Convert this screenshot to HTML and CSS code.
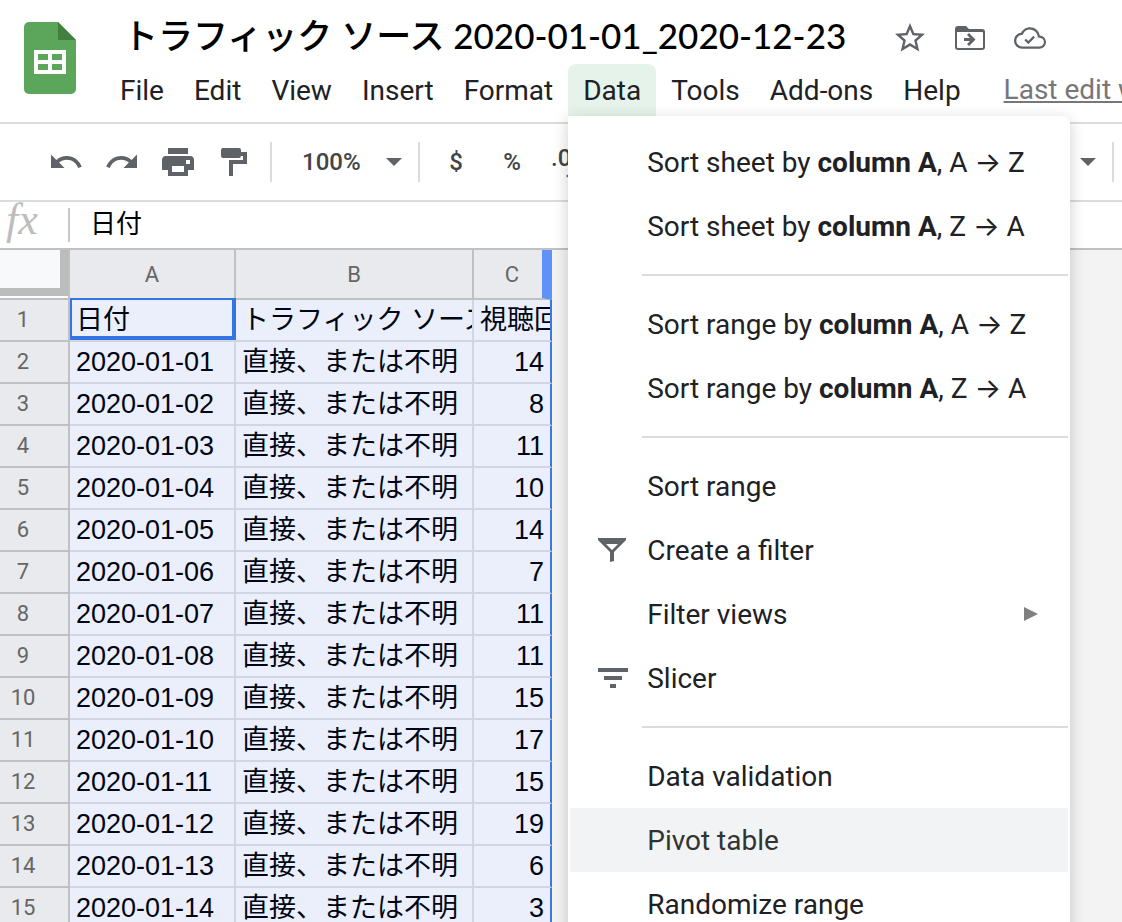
FILE: index.html
```html
<!DOCTYPE html>
<html lang="en">
<head>
  <meta charset="UTF-8" />
  <meta name="viewport" content="width=device-width, initial-scale=1.0" />
  <title>トラフィック ソース 2020-01-01_2020-12-23</title>
  <link rel="stylesheet" href="styles.css">
</head>
<body>
  <header class="header">
    <svg class="logo" viewBox="0 0 52 72">
      <path fill="#5ca65c" d="M5 0h29l18 18v49a5 5 0 0 1-5 5H5a5 5 0 0 1-5-5V5a5 5 0 0 1 5-5z"/>
      <path fill="#41803f" d="M34 0l18 18H34z"/>
      <path fill="#fff" fill-rule="evenodd" d="M10 28h32v24H10zM14 32v6h10v-6zM28 32v6h10v-6zM14 42v6h10v-6zM28 42v6h10v-6z"/>
    </svg>
    <div class="header-main">
      <div class="title-row">
        <h1>トラフィック ソース 2020-01-01_2020-12-23</h1>
        <button class="title-btn" aria-label="Star">
          <svg width="36" height="36" viewBox="0 0 24 24"><path d="M22 9.24l-7.19-.62L12 2 9.19 8.63 2 9.24l5.46 4.73L5.82 21 12 17.27 18.18 21l-1.63-7.03L22 9.24zM12 15.4l-3.76 2.27 1-4.28-3.32-2.88 4.38-.38L12 6.1l1.71 4.04 4.38.38-3.32 2.88 1 4.28L12 15.4z"/></svg>
        </button>
        <button class="title-btn" aria-label="Move">
          <svg width="36" height="36" viewBox="0 0 36 36"><path fill-rule="evenodd" d="M6 6h8l3 3h13a3 3 0 0 1 3 3v15a3 3 0 0 1-3 3H6a3 3 0 0 1-3-3V9a3 3 0 0 1 3-3zM5 12v15a1 1 0 0 0 1 1h24a1 1 0 0 0 1-1V13a1 1 0 0 0-1-1z"/><path d="M12 18h6l-3-3 2-2 6.500 6.500-6.500 6.500-2-2 3-3h-6z"/></svg>
        </button>
        <button class="title-btn" aria-label="Document status">
          <svg width="32" height="32" viewBox="0 0 24 24"><path d="M19.350 10.040C18.670 6.590 15.640 4 12 4 9.110 4 6.610 5.640 5.360 8.040 2.340 8.360 0 10.910 0 14c0 3.310 2.690 6 6 6h13c2.760 0 5-2.240 5-5 0-2.640-2.050-4.780-4.650-4.960zM19 18.300H6A4.300 4.300 0 0 1 5.600 9.720l.9-.1.420-.78A5.750 5.750 0 0 1 17.680 10.370l.26 1.280 1.300.09A3.280 3.280 0 0 1 19 18.300zM10.700 14.200L9 12.500l-1.200 1.200 2.900 2.900 5-5-1.200-1.200z"/></svg>
        </button>
      </div>
      <nav class="menubar">
        <button>File</button>
        <button>Edit</button>
        <button>View</button>
        <button>Insert</button>
        <button>Format</button>
        <div class="menu-wrap">
          <button class="active">Data</button>
          <div class="dropdown">
            <button><span>Sort sheet by <b>column A</b>, A <i>→</i> Z</span></button>
            <button><span>Sort sheet by <b>column A</b>, Z <i>→</i> A</span></button>
            <hr>
            <button><span>Sort range by <b>column A</b>, A <i>→</i> Z</span></button>
            <button><span>Sort range by <b>column A</b>, Z <i>→</i> A</span></button>
            <hr>
            <button><span>Sort range</span></button>
            <button>
              <svg class="item-icon" viewBox="0 0 32 32"><path fill-rule="evenodd" d="M1 4h28v2L17 18v9l-4 1V18L1 6zM9 10l6 6 6-6z"/></svg>
              <span>Create a filter</span>
            </button>
            <button><span>Filter views</span><svg class="submenu-arrow" viewBox="0 0 14 14"><path d="M0 0l14 7-14 7z"/></svg></button>
            <button>
              <svg class="item-icon" viewBox="0 0 32 32"><path d="M1 6h30v4H1zM7 14h18v4H7zM13 22h6v4h-6z"/></svg>
              <span>Slicer</span>
            </button>
            <hr>
            <button><span>Data validation</span></button>
            <button class="hover"><span>Pivot table</span></button>
            <button><span>Randomize range</span></button>
          </div>
        </div>
        <button>Tools</button>
        <button>Add-ons</button>
        <button>Help</button>
        <a class="last-edit" href="#">Last edit was</a>
      </nav>
    </div>
  </header>

  <div class="toolbar">
    <button aria-label="Undo"><svg width="36" height="36" viewBox="0 0 24 24"><path d="M12.500 8c-2.650 0-5.050.99-6.900 2.600L2 7v9h9l-3.620-3.620c1.390-1.160 3.160-1.880 5.120-1.880 3.540 0 6.550 2.310 7.600 5.500l2.370-.78C21.080 11.030 17.150 8 12.500 8z"/></svg></button>
    <button aria-label="Redo"><svg width="36" height="36" viewBox="0 0 24 24"><path d="M18.400 10.600C16.550 8.990 14.150 8 11.500 8c-4.650 0-8.580 3.030-9.960 7.220L3.900 16c1.050-3.190 4.050-5.500 7.600-5.500 1.950 0 3.730.72 5.120 1.880L13 16h9V7l-3.600 3.600z"/></svg></button>
    <button aria-label="Print"><svg width="36" height="36" viewBox="0 0 36 36"><path fill-rule="evenodd" d="M8 4h20v6H8zM6 12h24a4 4 0 0 1 4 4v10h-6v6H8v-6H2V16a4 4 0 0 1 4-4zM26 16v4h4v-4zM12 22v6h12v-6z"/></svg></button>
    <button aria-label="Paint format"><svg width="36" height="36" viewBox="0 0 36 36"><path d="M7 4h16a2 2 0 0 1 2 2v2h6v12H17v12h-4V16h14v-4h-2a2 2 0 0 1-2 2H7a2 2 0 0 1-2-2V6a2 2 0 0 1 2-2z"/></svg></button>
    <span class="divider"></span>
    <div class="zoom">
      <select aria-label="Zoom"><option>100%</option></select>
      <svg class="caret" viewBox="0 0 16 8"><path d="M0 0h16L8 8z"/></svg>
    </div>
    <span class="divider"></span>
    <button>$</button>
    <button>%</button>
    <button class="decimal" aria-label="Decrease decimal places">.0<svg width="24" height="8" viewBox="0 0 24 8"><path d="M0 4l5-4v3h19v2H5v3z"/></svg></button>
    <div class="toolbar-end">
      <button class="more" aria-label="More"><svg class="caret" viewBox="0 0 16 8"><path d="M0 0h16L8 8z"/></svg></button>
      <span class="divider"></span>
    </div>
  </div>

  <div class="formula-bar">
    <label for="formula">fx</label>
    <input id="formula" type="text" value="日付">
  </div>

  <main class="sheet">
    <table>
      <colgroup>
        <col class="col-num"><col class="col-a"><col class="col-b"><col class="col-c">
      </colgroup>
      <thead>
        <tr><th class="corner"></th><th>A</th><th>B</th><th class="last">C</th></tr>
      </thead>
      <tbody id="rows">
        <tr><th>1</th><td class="selected">日付</td><td>トラフィック ソース</td><td>視聴回数</td></tr>
      </tbody>
    </table>
  </main>

  <script>
    const views = [14, 8, 11, 10, 14, 7, 11, 11, 15, 17, 15, 19, 6, 3];
    const rows = document.getElementById('rows');

    views.forEach((count, i) => {
      const day = String(i + 1).padStart(2, '0');
      const tr = document.createElement('tr');
      tr.innerHTML = `<th>${i + 2}</th><td>2020-01-${day}</td><td>直接、または不明</td><td class="number">${count}</td>`;
      rows.appendChild(tr);
    });
  </script>
</body>
</html>
```

FILE: styles.css
```css
* {
  margin: 0;
  padding: 0;
  box-sizing: border-box;
}

body {
  height: 100vh;
  overflow: hidden;
  display: flex;
  flex-direction: column;
  background: #fff;
  color: #202124;
  font-family: Roboto, "Noto Sans CJK JP", sans-serif;
  font-size: 28px;
}

button {
  border: none;
  background: none;
  color: inherit;
  font: inherit;
  white-space: nowrap;
  cursor: pointer;
}

svg {
  display: block;
  flex-shrink: 0;
  fill: #5f6368;
}

/* Header */
.header {
  display: flex;
  flex-shrink: 0;
  padding: 12px 0 6px 24px;
  border-bottom: 2px solid #dadce0;
}

.logo {
  width: 52px;
  height: 72px;
  margin: 10px 29px 0 0;
}

.header-main {
  flex: 1;
  min-width: 0;
}

.title-row {
  display: flex;
  align-items: center;
  height: 52px;
  padding-left: 18px;
}

.title-row h1 {
  padding-bottom: 6px;
  margin-right: 34px;
  color: #000;
  font-family: Lato, "Noto Sans CJK JP", sans-serif;
  font-size: 35px;
  font-weight: 500;
  line-height: 46px;
  white-space: nowrap;
}

.title-btn {
  display: flex;
  justify-content: center;
  width: 60px;
}

.menubar {
  display: flex;
}

.menubar > button,
.menu-wrap > button {
  height: 52px;
  padding: 0 15px;
}

.menu-wrap {
  position: relative;
}

.menu-wrap > .active {
  background: #e6f3ea;
  border-radius: 8px 8px 0 0;
}

.last-edit {
  margin-left: 28px;
  color: #777;
  line-height: 52px;
  white-space: nowrap;
}

/* Data menu */
.dropdown {
  position: absolute;
  top: 100%;
  left: 0;
  z-index: 10;
  width: 502px;
  padding: 14px 2px;
  background: #fff;
  border-radius: 0 8px 8px 8px;
  box-shadow: 0 4px 16px rgba(0, 0, 0, 0.2);
}

.dropdown button {
  display: flex;
  align-items: center;
  width: 100%;
  height: 64px;
  padding-right: 30px;
}

.dropdown span {
  margin-left: 77px;
}

.dropdown i {
  font-family: Inter, sans-serif;
  font-style: normal;
  line-height: 28px;
}

.dropdown hr {
  margin: 16px 0 16px 72px;
  border: none;
  border-top: 2px solid #dadce0;
}

.dropdown .hover {
  background: #f1f3f4;
  color: #333;
}

.item-icon {
  width: 32px;
  height: 32px;
  margin-left: 27px;
}

.item-icon + span {
  margin-left: 18px;
}

.submenu-arrow {
  width: 14px;
  height: 14px;
  margin-left: auto;
  fill: #808080;
}

/* Toolbar */
.toolbar {
  display: flex;
  flex-shrink: 0;
  align-items: center;
  height: 78px;
  padding-left: 38px;
  border-bottom: 2px solid #dadce0;
  color: #444;
  font-size: 24px;
  font-weight: 500;
}

.toolbar button {
  display: flex;
  align-items: center;
  justify-content: center;
  width: 56px;
  height: 56px;
}

.divider {
  width: 2px;
  height: 40px;
  margin: 0 8px;
  background: #dadce0;
}

.zoom {
  display: flex;
  align-items: center;
  width: 130px;
}

.zoom select {
  width: 106px;
  padding-left: 22px;
  appearance: none;
  border: none;
  background: none;
  color: inherit;
  font: inherit;
}

.caret {
  width: 16px;
  height: 8px;
}

.toolbar .decimal {
  flex-direction: column;
  align-items: flex-start;
  padding-left: 11px;
}

.decimal svg {
  margin-left: 15px;
}

.toolbar-end {
  display: flex;
  align-items: center;
  margin-left: auto;
}

.toolbar .more {
  width: 32px;
}

/* Formula bar */
.formula-bar {
  display: flex;
  flex-shrink: 0;
  align-items: center;
  height: 48px;
  border-bottom: 2px solid #c0c0c0;
}

.formula-bar label {
  width: 70px;
  height: 34px;
  padding-left: 6px;
  border-right: 2px solid #c8c8c8;
  color: #bdbdbd;
  font-family: "Liberation Serif", serif;
  font-size: 44px;
  font-style: italic;
  line-height: 24px;
}

.formula-bar input {
  flex: 1;
  height: 44px;
  padding: 0 0 8px 20px;
  border: none;
  outline: none;
  color: #000;
  font-family: "Liberation Sans", "Noto Sans CJK JP", sans-serif;
  font-size: 26px;
}

/* Sheet */
.sheet {
  flex: 1;
  min-height: 0;
  overflow: hidden;
  background: #f3f3f3;
}

table {
  width: 552px;
  table-layout: fixed;
  border-spacing: 0;
}

.col-num { width: 70px; }
.col-a { width: 166px; }
.col-b { width: 238px; }
.col-c { width: 78px; }

th {
  background: #e8eaed;
  border-right: 2px solid #c0c0c0;
  border-bottom: 2px solid #c0c0c0;
  color: #666;
  font-size: 22px;
  font-weight: 400;
}

thead th {
  height: 50px;
}

.corner {
  background: #f8f9fa;
  box-shadow: inset 0 -2px #fff, inset -8px -10px #bcbcbc;
}

thead .last {
  padding-left: 8px;
  border-right: 10px solid #5e92f6;
}

tbody th {
  padding: 0 22px 2px 0;
}

td {
  position: relative;
  height: 42px;
  padding: 0 6px;
  overflow: hidden;
  background: #ebeffb;
  border-right: 2px solid #d0d5e2;
  border-bottom: 2px solid #d0d5e2;
  color: #000614;
  font-family: "Liberation Sans", "Noto Sans CJK JP", sans-serif;
  font-size: 27px;
  line-height: 40px;
  white-space: nowrap;
}

td:last-child {
  border-right-color: #3b78e7;
}

.number {
  text-align: right;
}

.selected {
  overflow: visible;
}

.selected::after {
  content: "";
  position: absolute;
  inset: -2px -2px 0 0;
  border: solid #3575e2;
  border-width: 2px 4px 4px 2px;
}
```
